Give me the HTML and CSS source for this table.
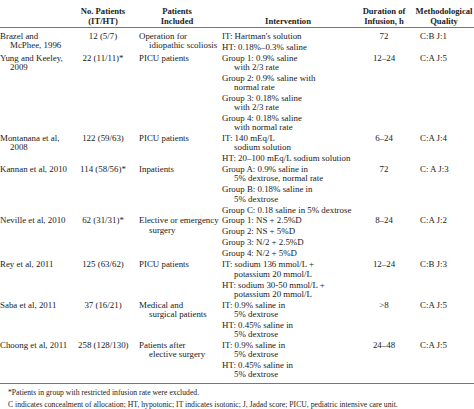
FILE: index.html
```html
<!DOCTYPE html>
<html>
<head>
<meta charset="utf-8">
<link rel="stylesheet" href="styles.css">
</head>
<body>
<div class="wrap">
<table class="tbl">
  <colgroup>
    <col class="w-study"><col class="w-num"><col class="w-inc"><col class="w-int"><col class="w-dur"><col class="w-qual">
  </colgroup>
  <thead>
    <tr>
      <th class="study"></th>
      <th class="num">No. Patients<br>(IT/HT)</th>
      <th class="inc">Patients<br>Included</th>
      <th class="int">Intervention</th>
      <th class="dur">Duration of<br>Infusion, h</th>
      <th class="qual">Methodological<br>Quality</th>
    </tr>
  </thead>
  <tbody>
    <tr class="first">
      <td class="study hang">Brazel and<br>McPhee, 1996</td>
      <td class="num">12 (5/7)</td>
      <td class="inc hang">Operation for<br>idiopathic scoliosis</td>
      <td class="int"><div class="e">IT: Hartman's solution</div><div class="e">HT: 0.18%–0.3% saline</div></td>
      <td class="dur">72</td>
      <td class="qual">C:B J:1</td>
    </tr>
    <tr>
      <td class="study hang">Yung and Keeley,<br>2009</td>
      <td class="num">22 (11/11)*</td>
      <td class="inc hang">PICU patients</td>
      <td class="int"><div class="e">Group 1: 0.9% saline<br>with 2/3 rate</div><div class="e">Group 2: 0.9% saline with<br>normal rate</div><div class="e">Group 3: 0.18% saline<br>with 2/3 rate</div><div class="e">Group 4: 0.18% saline<br>with normal rate</div></td>
      <td class="dur">12–24</td>
      <td class="qual">C:A J:5</td>
    </tr>
    <tr>
      <td class="study hang">Montanana et al,<br>2008</td>
      <td class="num">122 (59/63)</td>
      <td class="inc hang">PICU patients</td>
      <td class="int"><div class="e">IT: 140 mEq/L<br>sodium solution</div><div class="e">HT: 20–100 mEq/L sodium solution</div></td>
      <td class="dur">6–24</td>
      <td class="qual">C:A J:4</td>
    </tr>
    <tr>
      <td class="study hang">Kannan et al, 2010</td>
      <td class="num">114 (58/56)*</td>
      <td class="inc hang">Inpatients</td>
      <td class="int"><div class="e">Group A: 0.9% saline in<br>5% dextrose, normal rate</div><div class="e">Group B: 0.18% saline in<br>5% dextrose</div><div class="e">Group C: 0.18 saline in 5% dextrose</div></td>
      <td class="dur">72</td>
      <td class="qual">C: A J:3</td>
    </tr>
    <tr>
      <td class="study hang">Neville et al, 2010</td>
      <td class="num">62 (31/31)*</td>
      <td class="inc hang">Elective or emergency<br>surgery</td>
      <td class="int"><div class="e">Group 1: NS + 2.5%D</div><div class="e">Group 2: NS + 5%D</div><div class="e">Group 3: N/2 + 2.5%D</div><div class="e">Group 4: N/2 + 5%D</div></td>
      <td class="dur">8–24</td>
      <td class="qual">C:A J:2</td>
    </tr>
    <tr>
      <td class="study hang">Rey et al, 2011</td>
      <td class="num">125 (63/62)</td>
      <td class="inc hang">PICU patients</td>
      <td class="int"><div class="e">IT: sodium 136 mmol/L +<br>potassium 20 mmol/L</div><div class="e">HT: sodium 30-50 mmol/L +<br>potassium 20 mmol/L</div></td>
      <td class="dur">12–24</td>
      <td class="qual">C:B J:3</td>
    </tr>
    <tr>
      <td class="study hang">Saba et al, 2011</td>
      <td class="num">37 (16/21)</td>
      <td class="inc hang">Medical and<br>surgical patients</td>
      <td class="int"><div class="e">IT: 0.9% saline in<br>5% dextrose</div><div class="e">HT: 0.45% saline in<br>5% dextrose</div></td>
      <td class="dur">&gt;8</td>
      <td class="qual">C:A J:5</td>
    </tr>
    <tr class="last">
      <td class="study hang">Choong et al, 2011</td>
      <td class="num">258 (128/130)</td>
      <td class="inc hang">Patients after<br>elective surgery</td>
      <td class="int"><div class="e">IT: 0.9% saline in<br>5% dextrose</div><div class="e">HT: 0.45% saline in<br>5% dextrose</div></td>
      <td class="dur">24–48</td>
      <td class="qual">C:A J:5</td>
    </tr>
  </tbody>
</table>
<div class="notes">
  <p class="note">*Patients in group with restricted infusion rate were excluded.</p>
  <p class="note">C indicates concealment of allocation; HT, hypotonic; IT indicates isotonic; J, Jadad score; PICU, pediatric intensive care unit.</p>
</div>
</div>
</body>
</html>
```

FILE: styles.css
```css
html, body {
  margin: 0;
  padding: 0;
  background: #ffffff;
}
body {
  color: #222222;
  font-family: "Liberation Serif", "Times New Roman", serif;
}
.wrap {
  width: 474px;
}
.tbl {
  width: 474px;
  border-collapse: collapse;
  table-layout: fixed;
}
.w-study { width: 78px; }
.w-num { width: 50px; }
.w-inc { width: 94px; }
.w-int { width: 132px; }
.w-dur { width: 60px; }
.w-qual { width: 60px; }

th {
  font-weight: bold;
  font-size: 8.6px;
  line-height: 10px;
  vertical-align: bottom;
  text-align: center;
  padding: 6px 0 1px;
  border-bottom: 1px solid #777777;
  white-space: nowrap;
}
td {
  font-size: 8.9px;
  line-height: 9.1px;
  vertical-align: top;
  padding: 1.9px 0 0;
  white-space: nowrap;
}
.tbl tr.first td { padding-top: 4px; }
.tbl tr.last td { padding-bottom: 4px; border-bottom: 1px solid #777777; }

.hang {
  padding-left: 10px;
  text-indent: -10px;
}
td.num { text-align: center; }
th.inc { padding-left: 11px; padding-right: 7px; }
td.inc { padding-left: 21px; }
td.int { padding-left: 0; }
.e {
  padding-left: 12px;
  text-indent: -12px;
}
.e + .e { margin-top: 1.9px; }
td.dur { text-align: center; }
td.qual { text-align: left; padding-left: 6px; }

.notes {
  padding: 3px 0 0 8px;
}
.note {
  margin: 0;
  font-size: 7.7px;
  line-height: 11.5px;
  white-space: nowrap;
}
```
